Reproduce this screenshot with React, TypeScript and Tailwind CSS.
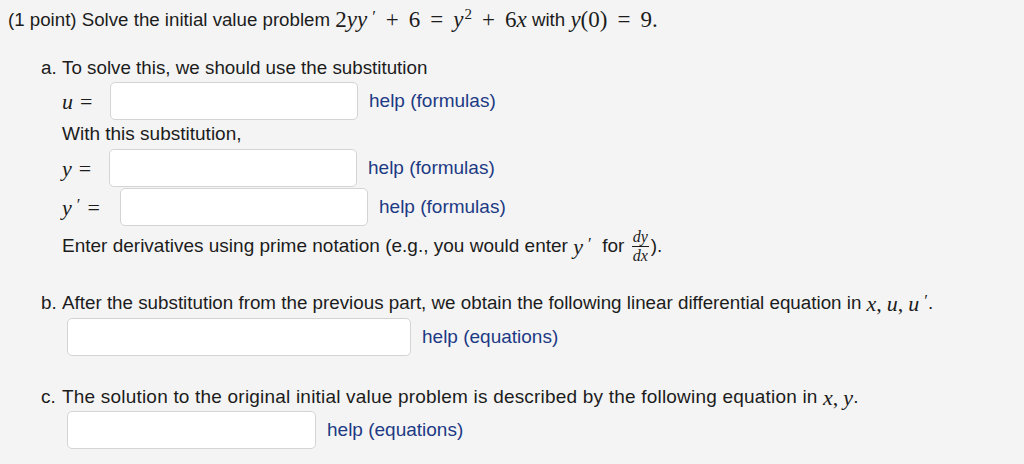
import React from 'react';

const serif = { fontFamily: '"Liberation Serif", "DejaVu Serif", serif' };

// italic variable
const V: React.FC<{ children: React.ReactNode }> = ({ children }) => (
  <span className="italic font-['Liberation_Serif',serif]">{children}</span>
);
// upright math symbol / number, sp = operator spacing
const N: React.FC<{ children: React.ReactNode; sp?: boolean }> = ({ children, sp }) => (
  <span className={`font-['Liberation_Serif',serif] ${sp ? 'mx-[10px]' : ''}`}>{children}</span>
);
const Prime = () => (
  <span className="font-['Liberation_Serif',serif] ml-[5px] text-[17px] relative -top-[5px]">′</span>
);

const Field: React.FC<{ w: string }> = ({ w }) => (
  <div className={`${w} h-[38px] bg-white border border-[#d4d4d4] rounded-[5px]`} />
);

const Help: React.FC<{ label: string }> = ({ label }) => (
  <span className="text-[#1d3a84] ml-[11px]">help ({label})</span>
);

export default function App() {
  return (
    <div className="w-[1024px] h-[464px] bg-[#f4f4f4] text-[#1c1c1c] font-['Liberation_Sans',Arial,sans-serif] text-[19px] overflow-hidden">
      <div className="h-[40px] flex items-center pl-[8px] whitespace-nowrap text-[18.7px]">
        <span>(1 point) Solve the initial value problem&nbsp;</span>
        <span className="text-[23px]">
          <N>2</N><V>yy</V><Prime />
          <N sp>+</N><N>6</N><N sp>=</N><V>y</V>
          <sup className="text-[15px] font-['Liberation_Serif',serif] -top-[8px] ml-[1px]">2</sup>
          <N sp>+</N><N>6</N><V>x</V>
        </span>
        <span>&nbsp;with&nbsp;</span>
        <span className="text-[23px]">
          <V>y</V><N>(0)</N><N sp>=</N><N>9.</N>
        </span>
      </div>

      <div className="pl-[41px]">
        {/* part a */}
        <div className="mt-[16px] h-[24px] flex items-center text-[18.8px]">
          <span className="w-[21px]">a.</span>
          <span>To solve this, we should use the substitution</span>
        </div>
        <div className="pl-[21px]">
          <div className="mt-[2px] h-[38px] flex items-center">
            <span className="text-[22px] w-[48px]" style={serif}><i>u</i><span className="ml-[7px]">=</span></span>
            <Field w="w-[248px]" />
            <Help label="formulas" />
          </div>
          <div className="mt-[2px] h-[24px] flex items-center">With this substitution,</div>
          <div className="mt-[3px] h-[38px] flex items-center">
            <span className="text-[22px] w-[47px]" style={serif}><i>y</i><span className="ml-[7px]">=</span></span>
            <Field w="w-[248px]" />
            <Help label="formulas" />
          </div>
          <div className="mt-[1px] h-[38px] flex items-center">
            <span className="text-[22px] w-[58px]" style={serif}><i>y</i><Prime /><span className="ml-[7px]">=</span></span>
            <Field w="w-[248px]" />
            <Help label="formulas" />
          </div>
          <div className="mt-[8px] h-[24px] flex items-center whitespace-nowrap">
            <span>Enter derivatives using prime notation (e.g., you would enter&nbsp;</span>
            <span className="text-[22px]"><V>y</V><Prime /></span>
            <span>&nbsp;&nbsp;for&nbsp;</span>
            <span className="inline-flex flex-col items-center leading-none text-[16px] italic font-['Liberation_Serif',serif] mx-[2px]">
              <span className="px-[1px] pb-[1px]">dy</span>
              <span className="w-full border-t border-[#1c1c1c]" />
              <span className="px-[1px] pt-[1px]">dx</span>
            </span>
            <span>).</span>
          </div>
        </div>

        {/* part b */}
        <div className="mt-[33px] h-[24px] flex items-center whitespace-nowrap text-[18.8px]">
          <span className="w-[21px]">b.</span>
          <span>After the substitution from the previous part, we obtain the following linear differential equation in&nbsp;</span>
          <span className="text-[22px]">
            <V>x</V><N>,</N><span className="ml-[5px]"><V>u</V></span><N>,</N><span className="ml-[5px]"><V>u</V></span><Prime />
          </span>
          <span>.</span>
        </div>
        <div className="mt-[3px] h-[38px] flex items-center pl-[26px]">
          <Field w="w-[344px]" />
          <Help label="equations" />
        </div>

        {/* part c */}
        <div className="mt-[29px] h-[24px] flex items-center whitespace-nowrap">
          <span className="w-[21px]">c.</span>
          <span className="tracking-[0.2px]">The solution to the original initial value problem is described by the following equation in&nbsp;</span>
          <span className="text-[22px]">
            <V>x</V><N>,</N><span className="ml-[5px]"><V>y</V></span>
          </span>
          <span>.</span>
        </div>
        <div className="mt-[2px] h-[38px] flex items-center pl-[26px]">
          <Field w="w-[249px]" />
          <Help label="equations" />
        </div>
      </div>
    </div>
  );
}
